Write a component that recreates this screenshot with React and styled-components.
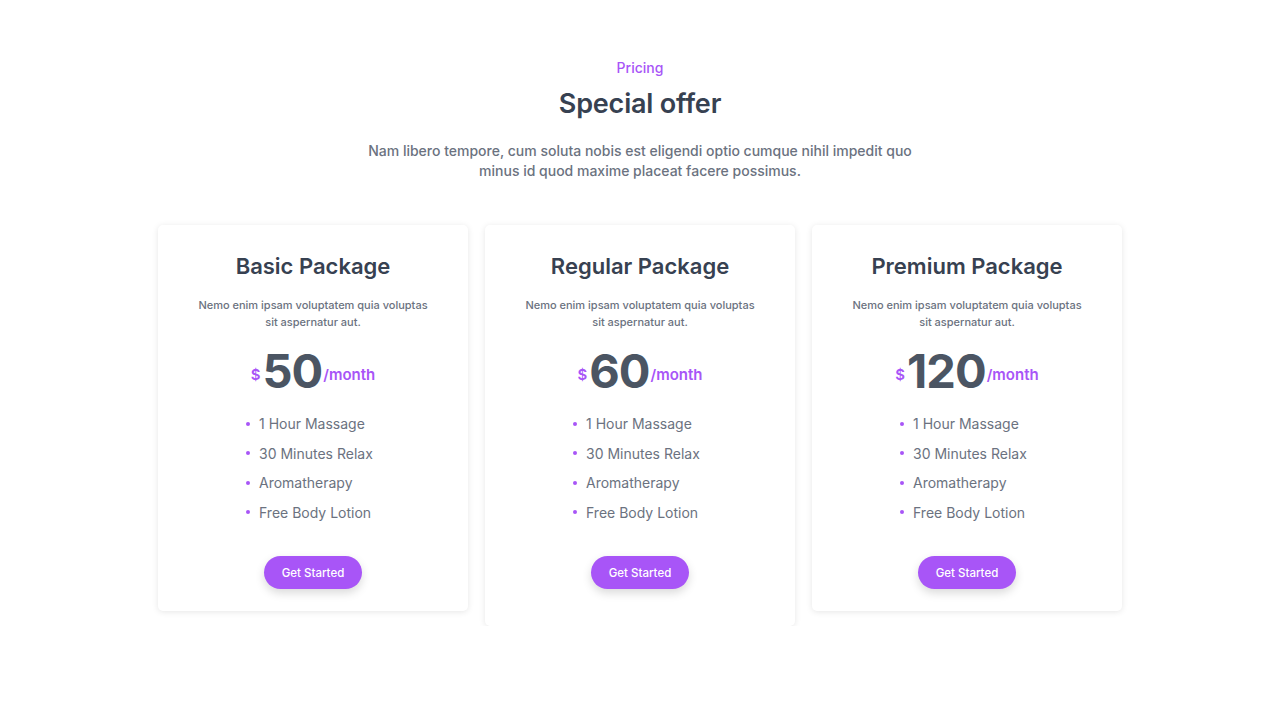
import styled, { createGlobalStyle } from 'styled-components'

const GlobalStyle = createGlobalStyle`
  body {
    margin: 0;
    background: #ffffff;
    font-family: Inter, 'Noto Sans', sans-serif;
  }
`

const Section = styled.section`
  display: flex;
  flex-direction: column;
  align-items: center;
  padding: 58px 0 0;
`

const Eyebrow = styled.p`
  margin: 0;
  color: #a855f7;
  font-size: 14px;
  font-weight: 500;
  line-height: 20px;
`

const Title = styled.h2`
  margin: 8px 0 0;
  color: #374151;
  font-size: 27px;
  font-weight: 600;
  line-height: 36px;
  letter-spacing: -0.2px;
`

const Lead = styled.p`
  margin: 19px 0 0;
  width: 560px;
  color: #6b7280;
  font-size: 14px;
  font-weight: 500;
  line-height: 20px;
  text-align: center;
`

const Cards = styled.div`
  display: grid;
  grid-template-columns: repeat(3, 310px);
  gap: 17px;
  align-items: start;
  margin-top: 44px;
`

const Card = styled.div`
  display: flex;
  flex-direction: column;
  align-items: center;
  padding: 25px 0 ${p => (p.$featured ? '37px' : '22px')};
  background: #ffffff;
  border-radius: 5px;
  box-shadow: 0 1px 6px rgba(0, 0, 0, 0.1);
`

const CardTitle = styled.h3`
  margin: 0;
  color: #374151;
  font-size: 22px;
  font-weight: 600;
  line-height: 32px;
`

const CardText = styled.p`
  margin: 15px 0 0;
  width: 240px;
  color: #6b7280;
  font-size: 11px;
  font-weight: 500;
  line-height: 17px;
  text-align: center;
`

const Price = styled.div`
  display: flex;
  align-items: center;
  margin-top: 12px;
  font-weight: 600;
`

const Currency = styled.span`
  color: #a855f7;
  font-size: 15px;
  margin: 6px 2px 0 0;
`

const Amount = styled.span`
  color: #4b5563;
  font-size: 47px;
  line-height: 56px;
  font-weight: 700;
  letter-spacing: -1px;
`

const Period = styled.span`
  color: #a855f7;
  font-size: 15px;
  margin: 6px 0 0 1px;
`

const Features = styled.ul`
  align-self: flex-start;
  margin: 10px 0 0 88px;
  padding: 0;
  list-style: none;
`

const Feature = styled.li`
  display: flex;
  align-items: center;
  gap: 9px;
  color: #6b7280;
  font-size: 14px;
  line-height: 29.5px;

  &::before {
    content: '';
    width: 4px;
    height: 4px;
    border-radius: 50%;
    background: #a855f7;
  }
`

const Button = styled.button`
  margin-top: 29px;
  height: 33px;
  padding: 0 18px;
  border: none;
  border-radius: 999px;
  background: #a855f7;
  color: #ffffff;
  font-family: inherit;
  font-size: 11.5px;
  font-weight: 500;
  box-shadow: 0 4px 10px rgba(0, 0, 0, 0.15);
  cursor: pointer;
`

const plans = [
  { name: 'Basic Package', price: 50 },
  { name: 'Regular Package', price: 60, featured: true },
  { name: 'Premium Package', price: 120 },
]

const features = ['1 Hour Massage', '30 Minutes Relax', 'Aromatherapy', 'Free Body Lotion']

export default function App () {
  return (
    <>
      <GlobalStyle />
      <Section>
        <Eyebrow>Pricing</Eyebrow>
        <Title>Special offer</Title>
        <Lead>
          Nam libero tempore, cum soluta nobis est eligendi optio cumque nihil impedit quo
          minus id quod maxime placeat facere possimus.
        </Lead>
        <Cards>
          {plans.map(plan => (
            <Card key={plan.name} $featured={plan.featured}>
              <CardTitle>{plan.name}</CardTitle>
              <CardText>
                Nemo enim ipsam voluptatem quia voluptas sit aspernatur aut.
              </CardText>
              <Price>
                <Currency>$</Currency>
                <Amount>{plan.price}</Amount>
                <Period>/month</Period>
              </Price>
              <Features>
                {features.map(f => <Feature key={f}>{f}</Feature>)}
              </Features>
              <Button>Get Started</Button>
            </Card>
          ))}
        </Cards>
      </Section>
    </>
  )
}
